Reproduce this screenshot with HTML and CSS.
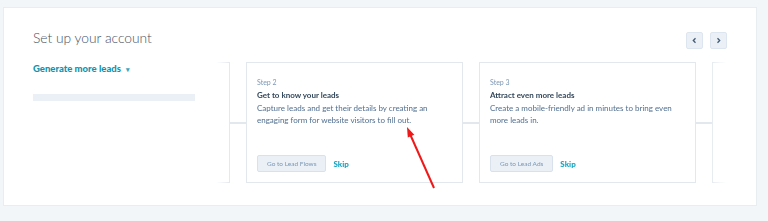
FILE: index.html
```html
<!DOCTYPE html>
<html>
<head>
<meta charset="utf-8">
<link rel="stylesheet" href="styles.css">
</head>
<body>
<div class="panel">
  <div class="header">
    <h1 class="title">Set up your account</h1>
    <div class="nav">
      <button class="nav-btn" aria-label="Previous">
        <svg width="7" height="7" viewBox="0 0 7 7"><path d="M4.5 1.2 L2.3 3.5 L4.5 5.8" fill="none" stroke="#425b76" stroke-width="1.3"/></svg>
      </button>
      <button class="nav-btn" aria-label="Next">
        <svg width="7" height="7" viewBox="0 0 7 7"><path d="M2.5 1.2 L4.7 3.5 L2.5 5.8" fill="none" stroke="#425b76" stroke-width="1.3"/></svg>
      </button>
    </div>
  </div>
  <div class="content">
    <div class="side">
      <div class="dropdown">Generate more leads <span class="caret">&#9662;</span></div>
      <div class="progress"></div>
    </div>
    <div class="viewport">
      <div class="track">
        <div class="card"></div>
        <div class="connector"></div>
        <div class="card">
          <div class="step">Step 2</div>
          <div class="card-title">Get to know your leads</div>
          <p class="desc">Capture leads and get their details by creating an engaging form for website visitors to fill out.</p>
          <div class="actions">
            <button class="btn">Go to Lead Flows</button>
            <a class="skip">Skip</a>
          </div>
        </div>
        <div class="connector"></div>
        <div class="card">
          <div class="step">Step 3</div>
          <div class="card-title">Attract even more leads</div>
          <p class="desc">Create a mobile-friendly ad in minutes to bring even more leads in.</p>
          <div class="actions">
            <button class="btn">Go to Lead Ads</button>
            <a class="skip">Skip</a>
          </div>
        </div>
        <div class="connector"></div>
        <div class="card"></div>
      </div>
    </div>
  </div>
  <svg class="arrow" width="44" height="70" viewBox="0 0 44 70">
    <line x1="9" y1="11" x2="33" y2="65" stroke="#f01818" stroke-width="2"/>
    <polygon points="6,4 13.3,11.7 6.8,14.6" fill="#f01818"/>
  </svg>
</div>
</body>
</html>
```

FILE: styles.css
```css
html, body {
  margin: 0;
  padding: 0;
}
body {
  background: #f3f6f9;
  font-family: Lato, "Open Sans", sans-serif;
  color: #33475b;
  width: 768px;
  height: 221px;
  overflow: hidden;
}
.panel {
  position: relative;
  margin: 7px 11px 0 3px;
  height: 199px;
  box-sizing: border-box;
  background: #fff;
  border: 1px solid #e8edf2;
  padding: 20px 29px 0 29px;
}
.header {
  display: flex;
  justify-content: space-between;
  align-items: flex-start;
}
.title {
  margin: 0;
  font-size: 13.8px;
  line-height: 19px;
  font-weight: 300;
  color: #3f5266;
  letter-spacing: 0;
}
.nav {
  display: flex;
  gap: 7px;
  margin-top: 4px;
}
.nav-btn {
  width: 17px;
  height: 17px;
  padding: 0;
  border: 1px solid #dde6ef;
  background: #eaf0f6;
  border-radius: 2px;
  display: flex;
  align-items: center;
  justify-content: center;
}
.content {
  display: flex;
  margin-top: 13px;
}
.side {
  width: 183px;
  flex: none;
}
.dropdown {
  font-size: 9.5px;
  line-height: 14px;
  font-weight: 900;
  color: #0f95ae;
}
.caret {
  font-size: 7px;
  margin-left: 3px;
  color: #3fa4ba;
}
.progress {
  margin-top: 18px;
  width: 162px;
  height: 7px;
  background: #eaf0f6;
}
.viewport {
  width: 510px;
  height: 121px;
  overflow: hidden;
  -webkit-mask-image: linear-gradient(to right, transparent 0, #000 14px, #000 494px, transparent 510px);
  mask-image: linear-gradient(to right, transparent 0, #000 14px, #000 494px, transparent 510px);
}
.track {
  display: flex;
  align-items: center;
  margin-left: -203px;
  height: 121px;
}
.card {
  flex: none;
  width: 217px;
  height: 121px;
  box-sizing: border-box;
  border: 1px solid #e3e8ee;
  background: #fff;
  padding: 14px 10px 10px 10px;
  display: flex;
  flex-direction: column;
}
.connector {
  flex: none;
  width: 16px;
  height: 2px;
  background: #e3e8ee;
}
.step {
  font-size: 7px;
  line-height: 10px;
  color: #7c98b6;
}
.card-title {
  font-size: 8px;
  line-height: 12px;
  font-weight: 700;
  color: #33475b;
  margin-top: 2px;
}
.desc {
  margin: 1px 0 0 0;
  font-size: 8px;
  line-height: 12px;
  color: #516f90;
}
.actions {
  margin-top: auto;
  display: flex;
  align-items: center;
  gap: 7px;
}
.btn {
  height: 17px;
  padding: 0 9px;
  font-family: Lato, sans-serif;
  font-size: 6.5px;
  color: #7c98b6;
  background: #eaf0f6;
  border: 1px solid #d9e2ec;
  border-radius: 2px;
}
.skip {
  font-size: 8px;
  font-weight: 900;
  color: #1aa5c2;
}
.arrow {
  position: absolute;
  left: 397px;
  top: 115px;
}
```
